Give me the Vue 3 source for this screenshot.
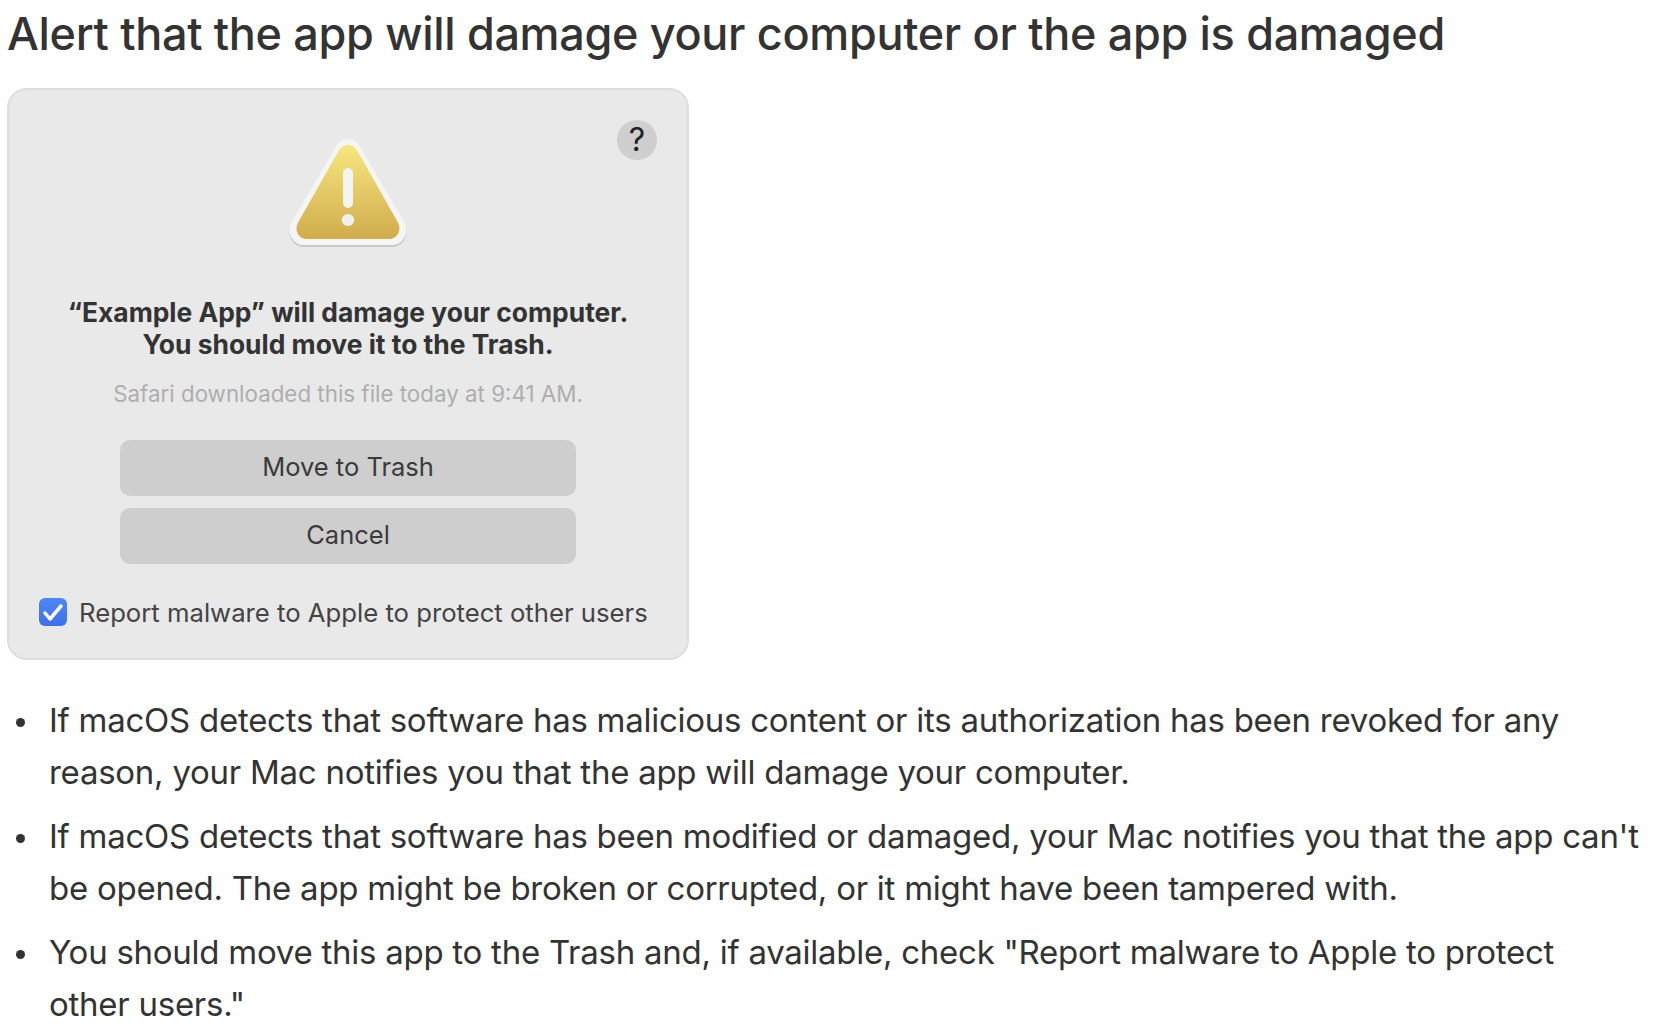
<template>
  <div class="page">
    <h1 class="title">Alert that the app will damage your computer or the app is damaged</h1>

    <div class="dialog">
      <span class="help">?</span>

      <svg class="warn" width="120" height="112" viewBox="0 0 120 112">
        <defs>
          <linearGradient id="warnFill" x1="0" y1="0" x2="0" y2="1">
            <stop offset="0" stop-color="#f7e77f" />
            <stop offset="1" stop-color="#d0ac4c" />
          </linearGradient>
        </defs>
        <path class="warn-shadow" d="M47 10.300 C50.500 4 55 1 60 1 C65 1 69.500 4 73 10.300 L116.300 83.700 C122 93 116 107 104 107 L16 107 C4 107 -2 93 3.700 83.700 Z" />
        <path d="M47 10.300 C50.500 4 55 1 60 1 C65 1 69.500 4 73 10.300 L116.300 83.700 C122 93 116 107 104 107 L16 107 C4 107 -2 93 3.700 83.700 Z" fill="#f5f5f5" />
        <path d="M50.300 13.500 C53 9 56 7 60 7 C64 7 67 9 69.700 13.500 L109.700 84 C114 91.500 110 101 101 101 L19 101 C10 101 6 91.500 10.300 84 Z" fill="url(#warnFill)" />
        <rect x="55" y="30" width="10" height="40" rx="5" fill="#f4f4f2" />
        <ellipse cx="60" cy="82" rx="6.300" ry="6" fill="#f0f0ee" />
      </svg>

      <p class="heading">“Example App” will damage your computer.<br />You should move it to the Trash.</p>
      <p class="note">Safari downloaded this file today at 9:41 AM.</p>

      <div class="buttons">
        <button class="btn">Move to Trash</button>
        <button class="btn">Cancel</button>
      </div>

      <label class="report">
        <span class="check">
          <svg width="28" height="28" viewBox="0 0 28 28">
            <path d="M6 15 L11 21 L22 8" fill="none" stroke="#fff" stroke-width="3.500" stroke-linecap="round" stroke-linejoin="round" />
          </svg>
        </span>
        Report malware to Apple to protect other users
      </label>
    </div>

    <ul class="points">
      <li v-for="item in points" :key="item"><span>{{ item }}</span></li>
    </ul>
  </div>
</template>

<script setup>
const points = [
  'If macOS detects that software has malicious content or its authorization has been revoked for any reason, your Mac notifies you that the app will damage your computer.',
  "If macOS detects that software has been modified or damaged, your Mac notifies you that the app can't be opened. The app might be broken or corrupted, or it might have been tampered with.",
  'You should move this app to the Trash and, if available, check "Report malware to Apple to protect other users."'
]
</script>

<style>
html, body {
  background: #fff;
  overflow: hidden;
}
</style>

<style scoped>
.page {
  height: 1030px;
  box-sizing: border-box;
  padding: 7px 0 0 7px;
  font-family: Inter, "Liberation Sans", sans-serif;
  color: #333;
  overflow: hidden;
}

.title {
  margin: 0 0 27px;
  font-size: 45px;
  line-height: 54px;
  font-weight: 500;
  letter-spacing: -0.33px;
  white-space: nowrap;
}

.dialog {
  position: relative;
  width: 682px;
  height: 572px;
  box-sizing: border-box;
  padding-top: 48px;
  background: #e9e9e9;
  border: 2px solid #dedede;
  border-radius: 20px;
  display: flex;
  flex-direction: column;
  align-items: center;
}

.help {
  position: absolute;
  top: 30px;
  right: 30px;
  width: 40px;
  height: 40px;
  border-radius: 50%;
  background: #cfcfcf;
  color: #222;
  font-size: 32px;
  font-weight: 400;
  line-height: 40px;
  text-align: center;
}

.warn {
  display: block;
  overflow: visible;
}

.warn-shadow {
  fill: #c9c9c9;
  transform: translateY(2px);
}

.heading {
  margin: 46px 0 0;
  font-size: 26.4px;
  line-height: 32px;
  font-weight: 700;
  text-align: center;
  white-space: nowrap;
}

.note {
  margin: 19px 0 0;
  font-size: 22.35px;
  line-height: 30px;
  color: #aeaeae;
  white-space: nowrap;
}

.buttons {
  margin-top: 31px;
  display: flex;
  flex-direction: column;
  gap: 12px;
}

.btn {
  width: 456px;
  height: 56px;
  border: none;
  border-radius: 10px;
  background: #cecece;
  color: #3a3a3a;
  font-family: inherit;
  font-size: 25.5px;
  padding: 0 0 4px;
}

.report {
  margin-top: 34px;
  align-self: flex-start;
  margin-left: 30px;
  display: flex;
  align-items: center;
  gap: 12px;
  font-size: 25.7px;
  line-height: 30px;
  color: #444;
  white-space: nowrap;
}

.check {
  width: 28px;
  height: 28px;
  margin-top: -2px;
  border-radius: 6px;
  background: linear-gradient(#4f86f5, #3f6fe8);
  display: block;
}

.check svg {
  display: block;
}

.points {
  margin: 34px 0 0;
  padding: 0;
  list-style: none;
  font-size: 33px;
  letter-spacing: -0.26px;
  line-height: 52px;
  width: 1635px;
}

.points li {
  display: grid;
  grid-template-columns: 10px 1fr;
  column-gap: 32px;
  margin-bottom: 12px;
}

.points li::before {
  content: "";
  width: 9px;
  height: 9px;
  margin: 24px 0 0 9px;
  border-radius: 50%;
  background: #333;
}
</style>
